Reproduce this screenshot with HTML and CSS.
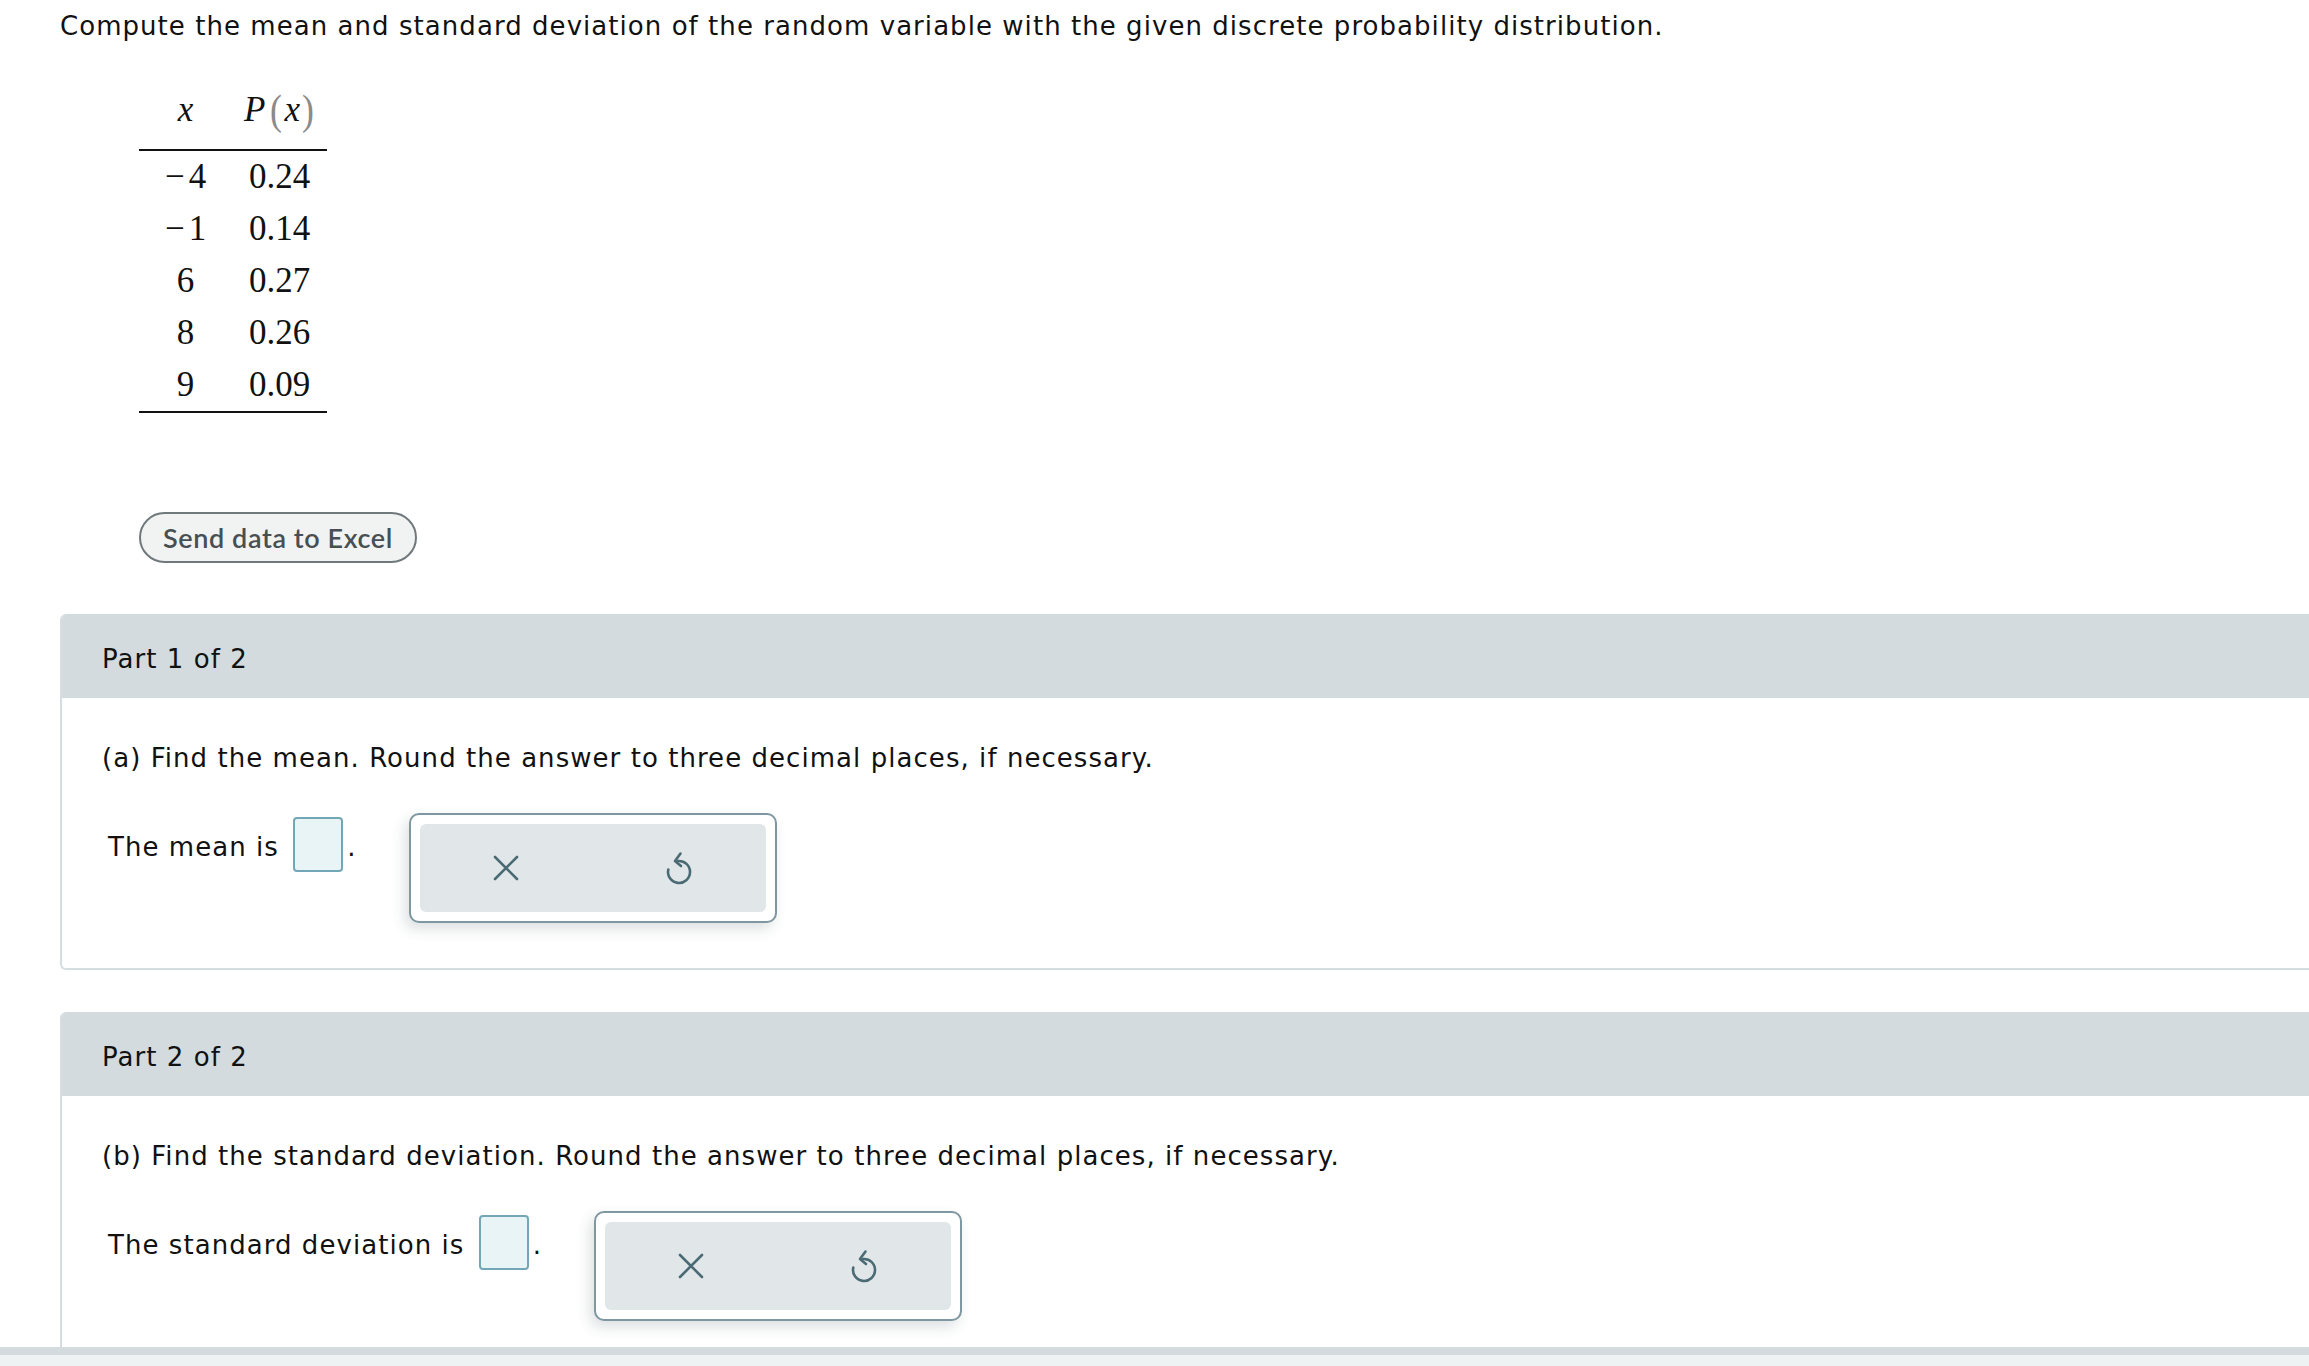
FILE: index.html
```html
<!DOCTYPE html>
<html lang="en">
<head>
<meta charset="utf-8">
<title>Discrete probability distribution</title>
<link rel="stylesheet" href="styles.css">
</head>
<body>
<div class="page">
  <p class="question">Compute the mean and standard deviation of the random variable with the given discrete probability distribution.</p>

  <table class="dist">
    <thead>
      <tr><th class="col-x"><i>x</i></th><th class="col-p"><i>P</i><span class="paren">(</span><i>x</i><span class="paren">)</span></th></tr>
    </thead>
    <tbody>
      <tr><td><span class="minus">−</span>4</td><td>0.24</td></tr>
      <tr><td><span class="minus">−</span>1</td><td>0.14</td></tr>
      <tr><td>6</td><td>0.27</td></tr>
      <tr><td>8</td><td>0.26</td></tr>
      <tr><td>9</td><td>0.09</td></tr>
    </tbody>
  </table>

  <button class="excel-btn" type="button">Send data to Excel</button>

  <section class="part">
    <div class="part-head">Part 1 of 2</div>
    <div class="part-body">
      <p class="prompt">(a) Find the mean. Round the answer to three decimal places, if necessary.</p>
      <div class="answer-row">
        <div class="stmt">The mean is <span class="ans-box"></span>.</div>
        <div class="tools">
          <div class="tools-inner">
            <span class="tool"><svg width="26" height="26" viewBox="0 0 26 26"><path d="M2 2 L24 24 M24 2 L2 24" fill="none" stroke="#4a6a74" stroke-width="2.6" stroke-linecap="round"/></svg></span>
            <span class="tool"><svg width="28" height="34" viewBox="0 0 28 34"><path d="M13 10 A11 11 0 1 1 3.3 18.5" fill="none" stroke="#4a6a74" stroke-width="2.6" stroke-linecap="round"/><path d="M15.5 2.5 L10 10 L16 15" fill="none" stroke="#4a6a74" stroke-width="2.6" stroke-linecap="round" stroke-linejoin="round"/></svg></span>
          </div>
        </div>
      </div>
    </div>
  </section>

  <section class="part">
    <div class="part-head">Part 2 of 2</div>
    <div class="part-body">
      <p class="prompt">(b) Find the standard deviation. Round the answer to three decimal places, if necessary.</p>
      <div class="answer-row">
        <div class="stmt">The standard deviation is <span class="ans-box"></span>.</div>
        <div class="tools">
          <div class="tools-inner">
            <span class="tool"><svg width="26" height="26" viewBox="0 0 26 26"><path d="M2 2 L24 24 M24 2 L2 24" fill="none" stroke="#4a6a74" stroke-width="2.6" stroke-linecap="round"/></svg></span>
            <span class="tool"><svg width="28" height="34" viewBox="0 0 28 34"><path d="M13 10 A11 11 0 1 1 3.3 18.5" fill="none" stroke="#4a6a74" stroke-width="2.6" stroke-linecap="round"/><path d="M15.5 2.5 L10 10 L16 15" fill="none" stroke="#4a6a74" stroke-width="2.6" stroke-linecap="round" stroke-linejoin="round"/></svg></span>
          </div>
        </div>
      </div>
    </div>
  </section>
</div>
<div class="footer-bar"></div>
</body>
</html>
```

FILE: styles.css
```css
html, body {
  margin: 0;
  padding: 0;
  overflow: hidden;
  background: #fff;
}
body {
  font-family: "DejaVu Sans", Verdana, sans-serif;
  font-size: 26px;
  letter-spacing: 1.05px;
  color: #111;
}
.page {
  padding-left: 60px;
}
.question {
  margin: 0;
  padding-top: 8px;
  line-height: 36px;
}
.dist {
  margin: 40px 0 0 79px;
  border-collapse: collapse;
  font-family: "Liberation Serif", "Times New Roman", serif;
  font-size: 35px;
  letter-spacing: 0;
  color: #111;
}
.dist th, .dist td {
  padding: 0;
  line-height: 52px;
  text-align: center;
  font-weight: normal;
}
.dist th {
  padding-bottom: 13px;
  border-bottom: 2px solid #111;
}
.dist .col-x { width: 93px; }
.dist .col-p { width: 95px; }
.dist tbody tr:last-child td {
  border-bottom: 2px solid #111;
}
.paren {
  display: inline-block;
  color: #8a8a8a;
  font-size: 42px;
  line-height: 30px;
  vertical-align: -3px;
  margin: 0 1px 0 4px;
  transform: scaleX(0.85);
}
.paren + i + .paren {
  margin: 0 0 0 1px;
}
.minus {
  margin-right: 4px;
}
.excel-btn {
  display: flex;
  align-items: center;
  margin: 99px 0 0 79px;
  height: 51px;
  box-sizing: border-box;
  padding: 0 22px;
  border: 2px solid #6f797c;
  border-radius: 26px;
  background: #f1f2f2;
  font-family: Lato, "Open Sans", sans-serif;
  font-weight: 600;
  font-size: 27px;
  letter-spacing: 0.6px;
  color: #474f52;
}
.part {
  margin-top: 51px;
  margin-right: -40px;
  border: 2px solid #d6dde0;
  border-top: none;
  border-radius: 6px 0 0 6px;
  overflow: hidden;
}
.part + .part {
  margin-top: 42px;
}
.part-head {
  background: #d3dbde;
  height: 84px;
  box-sizing: border-box;
  padding: 6px 0 0 42px;
  line-height: 78px;
  margin-left: -2px;
}
.part-body {
  padding: 42px 0 45px 40px;
}
.prompt {
  margin: 0;
  line-height: 36px;
}
.answer-row {
  display: flex;
  align-items: flex-start;
  margin-top: 37px;
}
.stmt {
  padding: 4px 0 0 6px;
  line-height: 36px;
}
.ans-box {
  display: inline-block;
  width: 50px;
  height: 55px;
  box-sizing: border-box;
  margin: 0 4px 0 5px;
  border: 2px solid #74a7b6;
  border-radius: 4px;
  background: #e9f4f7;
  vertical-align: -16px;
}
.tools {
  margin-left: 52px;
  width: 368px;
  height: 110px;
  box-sizing: border-box;
  padding: 9px;
  border: 2px solid #7e97a0;
  border-radius: 10px;
  background: #fff;
  box-shadow: -4px 6px 14px rgba(40, 60, 70, 0.16);
}
.tools-inner {
  display: flex;
  height: 100%;
  background: #e1e6e8;
  border-radius: 6px;
}
.tool {
  flex: 1;
  display: flex;
  align-items: center;
  justify-content: center;
}
.tool svg {
  display: block;
}
.footer-bar {
  position: fixed;
  left: 0;
  right: 0;
  bottom: 0;
  height: 19px;
  box-sizing: border-box;
  border-top: 8px solid #d4dbde;
  background: #eff2f3;
}
```
